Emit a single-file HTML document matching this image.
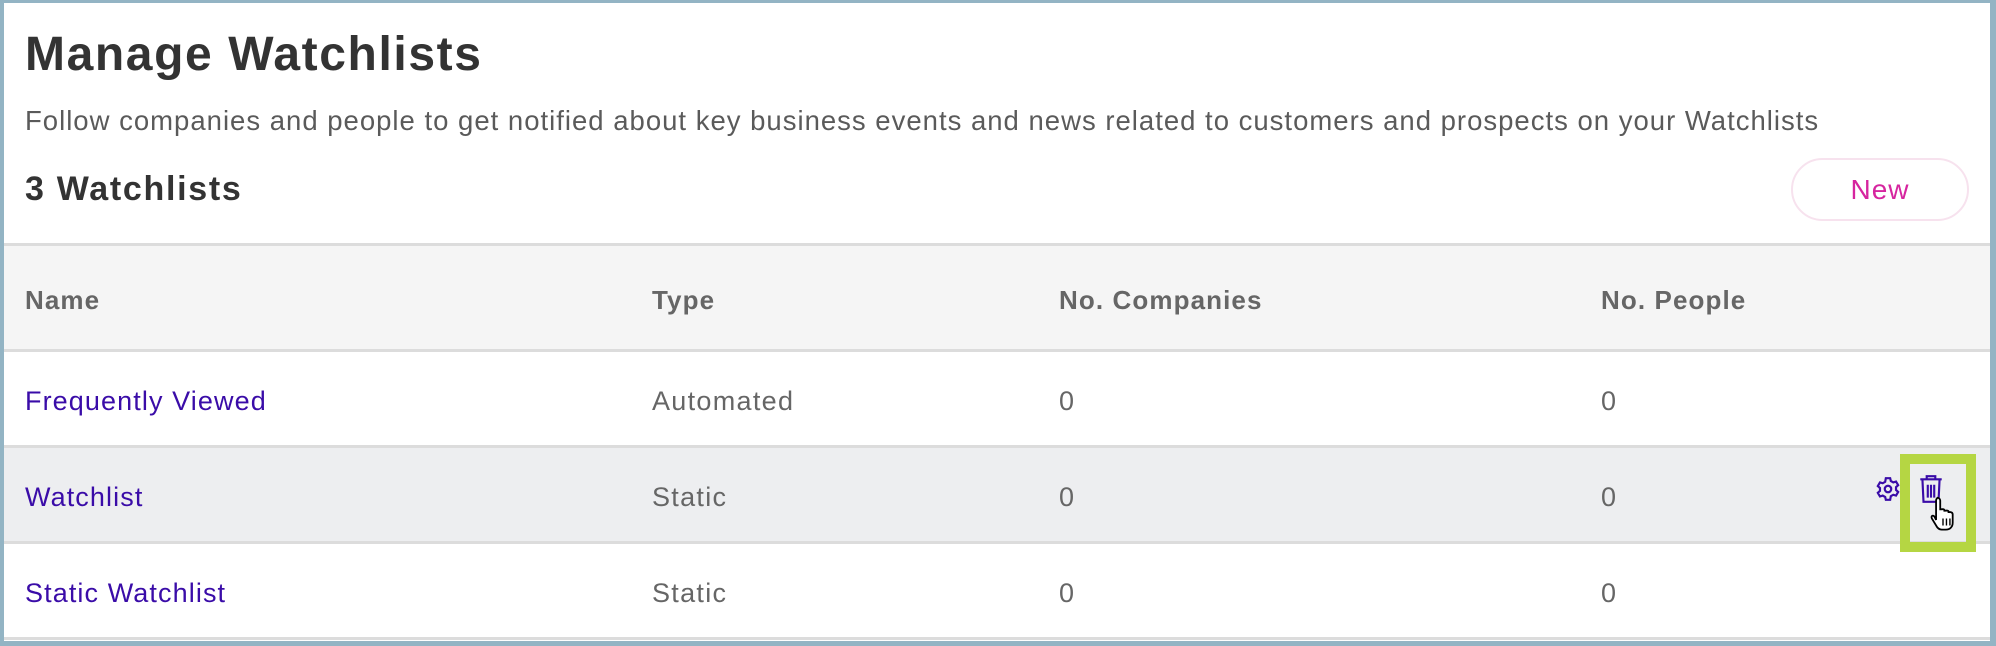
<!DOCTYPE html>
<html><head><meta charset="utf-8"><style>
*{margin:0;padding:0;box-sizing:border-box}
body{width:1996px;height:646px;background:#93b4c4;position:relative;overflow:hidden;font-family:"Liberation Sans",sans-serif}
.card{position:absolute;left:4px;top:3px;width:1986px;height:638px;background:#fff;overflow:hidden}
.abs{position:absolute;white-space:nowrap}
h1{position:absolute;left:21px;top:24px;font-size:48px;font-weight:bold;color:#333;letter-spacing:1.6px}
.sub{left:21px;top:102px;font-size:27.5px;color:#5a5a5a;letter-spacing:1px}
.cnt{left:21px;top:167px;font-size:34px;font-weight:bold;color:#333;letter-spacing:1.7px}
.btn{position:absolute;left:1787px;top:155px;width:178px;height:63px;border:2px solid #f7e2ee;border-radius:32px;color:#d6259f;font-size:28px;text-align:center;line-height:59px;letter-spacing:1px}
.hdr{position:absolute;left:0;top:240px;width:100%;height:109px;background:#f5f5f5;border-top:3px solid #dcdcdc;border-bottom:3px solid #dcdcdc}
.row{position:absolute;left:0;width:100%;height:96px;border-bottom:3px solid #dcdcdc}
.th{font-size:26px;font-weight:bold;color:#666;letter-spacing:1.1px}
.td{font-size:27px;color:#666;letter-spacing:1.3px}
.ln{font-size:27px;color:#3a0ca8;letter-spacing:1.1px}
</style></head><body>
<div class="card">
<h1>Manage Watchlists</h1>
<div class="abs sub">Follow companies and people to get notified about key business events and news related to customers and prospects on your Watchlists</div>
<div class="abs cnt">3 Watchlists</div>
<div class="btn">New</div>
<div class="hdr"></div>
<div class="abs th" style="left:21px;top:282px">Name</div>
<div class="abs th" style="left:648px;top:282px">Type</div>
<div class="abs th" style="left:1055px;top:282px">No. Companies</div>
<div class="abs th" style="left:1597px;top:282px">No. People</div>
<div class="row" style="top:349px;background:#fff"></div>
<div class="row" style="top:445px;background:#edeef0"></div>
<div class="row" style="top:541px;background:#fff"></div>
<div class="abs ln" style="left:21px;top:383px">Frequently Viewed</div>
<div class="abs td" style="left:648px;top:383px">Automated</div>
<div class="abs td" style="left:1055px;top:383px">0</div>
<div class="abs td" style="left:1597px;top:383px">0</div>
<div class="abs ln" style="left:21px;top:479px">Watchlist</div>
<div class="abs td" style="left:648px;top:479px">Static</div>
<div class="abs td" style="left:1055px;top:479px">0</div>
<div class="abs td" style="left:1597px;top:479px">0</div>
<div class="abs ln" style="left:21px;top:575px">Static Watchlist</div>
<div class="abs td" style="left:648px;top:575px">Static</div>
<div class="abs td" style="left:1055px;top:575px">0</div>
<div class="abs td" style="left:1597px;top:575px">0</div>
<svg class="abs" style="left:1871px;top:472px" width="26" height="28" viewBox="0 0 24 24" fill="none" stroke="#3a0ca8" stroke-width="2"><circle cx="12" cy="12" r="3"/><path d="M10 2h4l.6 2.6 2.3 1.3 2.5-.8 2 3.4-2 1.8v2.6l2 1.8-2 3.4-2.5-.8-2.3 1.3L14 22h-4l-.6-2.6-2.3-1.3-2.5.8-2-3.4 2-1.8v-2.6l-2-1.8 2-3.4 2.5.8 2.3-1.3z"/></svg>
<div style="position:absolute;left:1896px;top:451px;width:76px;height:98px;border:10px solid #b5d643"></div>
<svg class="abs" style="left:1914px;top:471px" width="26" height="30" viewBox="0 0 24 28" fill="none" stroke="#3a0ca8" stroke-width="2"><path d="M2 5h20M8 5V2h8v3M4 5l1 21h14l1-21M9 10v12M12 10v12M15 10v12"/></svg>
<svg class="abs" style="left:1925px;top:492px" width="28" height="36" viewBox="0 0 20 26"><path d="M6 2c1 0 2 1 2 2v7c0-1 3-1 3 0v1c0-1 3-1 3 0v1c0-1 3-1 3 1v6c0 3-2 5-5 5H9c-2 0-3-1-4-3l-3-5c-1-2 1-3 2-1l1 2V4c0-1 1-2 1-2z" fill="#fff" stroke="#000" stroke-width="1.3"/><path d="M10 17v5M12.5 17v5M15 17v5" stroke="#000" stroke-width="1"/></svg>
</div>
</body></html>
